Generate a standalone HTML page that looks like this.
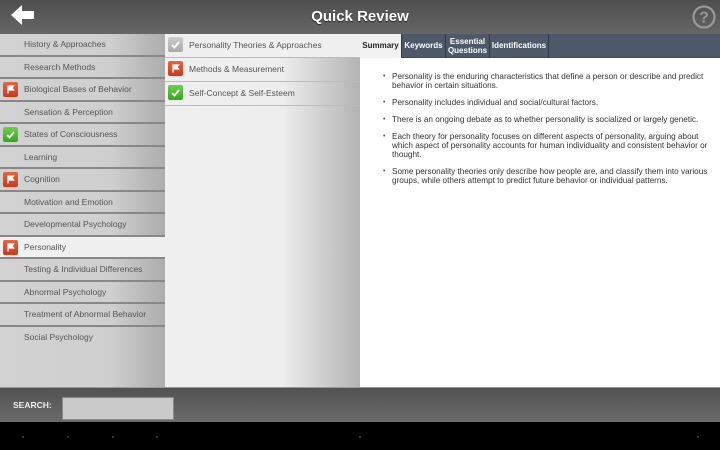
<!DOCTYPE html>
<html><head><style>
*{margin:0;padding:0;box-sizing:border-box}
body{width:720px;height:450px;overflow:hidden;font-family:"Liberation Sans",sans-serif;background:#000;position:relative}
.hdr{position:absolute;left:0;top:0;width:720px;height:34px;background:linear-gradient(#4e4e4e,#666);}
.title{position:absolute;left:0;right:0;top:8px;text-align:center;color:#fff;font-weight:bold;font-size:15px;text-shadow:0 1px 1px #222}
.col1{position:absolute;left:0;top:34px;width:165px;height:353px;background:linear-gradient(90deg,#d2d2d2 0,#cfcfcf 110px,#adadad 165px)}
.r1{position:absolute;left:0;width:165px;height:22.5px;border-bottom:2px solid #888;font-size:8.5px;color:#555;padding-left:24px;line-height:21px}
.sel{background:#f0f0f0}
.ic{position:absolute;left:3px;top:3px;width:15px;height:15px;border-radius:2px}
.fl{background:linear-gradient(#e8633e,#c63c1e)}
.ck{background:linear-gradient(#6cd24c,#3aa321)}
.gy{background:linear-gradient(#ccc,#aaa)}
.ic svg{position:absolute;left:0;top:0}
.col2{position:absolute;left:165px;top:34px;width:195px;height:353px;background:linear-gradient(90deg,#f0f0f0 0,#eeeeee 60%,#b3b3b3 100%)}
.r2{position:absolute;left:0;width:195px;height:24px;border-bottom:1px solid #bbb;font-size:8.5px;color:#555;padding-left:24px;line-height:23px}
.content{position:absolute;left:360px;top:34px;width:360px;height:353px;background:#fff}
.tabs{position:absolute;left:0;top:0;width:360px;height:24px;background:#4d5868;border-bottom:1px solid #3e4757}
.tab{position:absolute;top:0;height:24px;color:#fff;font-weight:bold;font-size:8px;text-align:center;border-right:1px solid #2f3845;line-height:24px}
ul{position:absolute;left:24px;top:38px;width:330px;font-size:8.2px;color:#333;line-height:9px;list-style:none}
li{position:relative;margin-bottom:8px;padding-left:8px}
li:before{content:"•";position:absolute;left:-1px;top:0;font-size:7px;color:#555}
.bot{position:absolute;left:0;top:387px;width:720px;height:35px;background:linear-gradient(#525252,#6a6a6a);border-top:1px solid #999}
.dot{position:absolute;top:436px;width:2px;height:2px;background:#333}
</style></head><body>
<div class="hdr">
<svg style="position:absolute;left:11px;top:5px" width="24" height="20" viewBox="0 0 24 20"><path d="M0 10 L11 0 L11 6 L23 6 L23 14 L11 14 L11 20 Z" fill="#fff"/></svg>
<div class="title">Quick Review</div>
<svg style="position:absolute;left:692px;top:5px" width="24" height="24" viewBox="0 0 24 24"><circle cx="12" cy="12" r="10.5" fill="none" stroke="#999" stroke-width="2.2"/><text x="12" y="17.5" text-anchor="middle" font-family="Liberation Sans" font-weight="bold" font-size="16" fill="#999">?</text></svg>
</div>
<div class="col1">
<div class="r1" style="top:0">History &amp; Approaches</div>
<div class="r1" style="top:22.5px">Research Methods</div>
<div class="r1" style="top:45px"><div class="ic fl"><svg width="15" height="15"><path d="M5 3.5v8M5 4h5.5l-1.5 2 1.5 2H5" fill="#fff" stroke="#fff" stroke-width="1.3"/></svg></div>Biological Bases of Behavior</div>
<div class="r1" style="top:67.5px">Sensation &amp; Perception</div>
<div class="r1" style="top:90px"><div class="ic ck"><svg width="15" height="15"><path d="M4 8l2.5 2.5L11 5" fill="none" stroke="#fff" stroke-width="1.8"/></svg></div>States of Consciousness</div>
<div class="r1" style="top:112.5px">Learning</div>
<div class="r1" style="top:135px"><div class="ic fl"><svg width="15" height="15"><path d="M5 3.5v8M5 4h5.5l-1.5 2 1.5 2H5" fill="#fff" stroke="#fff" stroke-width="1.3"/></svg></div>Cognition</div>
<div class="r1" style="top:157.5px">Motivation and Emotion</div>
<div class="r1" style="top:180px">Developmental Psychology</div>
<div class="r1 sel" style="top:202.5px"><div class="ic fl"><svg width="15" height="15"><path d="M5 3.5v8M5 4h5.5l-1.5 2 1.5 2H5" fill="#fff" stroke="#fff" stroke-width="1.3"/></svg></div>Personality</div>
<div class="r1" style="top:225px">Testing &amp; Individual Differences</div>
<div class="r1" style="top:247.5px">Abnormal Psychology</div>
<div class="r1" style="top:270px">Treatment of Abnormal Behavior</div>
<div class="r1" style="top:292.5px;border:none">Social Psychology</div>
</div>
<div class="col2">
<div class="r2" style="top:0;background:#f0f0f0"><div class="ic gy"><svg width="15" height="15"><path d="M4 8l2.5 2.5L11 5" fill="none" stroke="#fff" stroke-width="1.8"/></svg></div>Personality Theories &amp; Approaches</div>
<div class="r2" style="top:24px"><div class="ic fl"><svg width="15" height="15"><path d="M5 3.5v8M5 4h5.5l-1.5 2 1.5 2H5" fill="#fff" stroke="#fff" stroke-width="1.3"/></svg></div>Methods &amp; Measurement</div>
<div class="r2" style="top:48px"><div class="ic ck"><svg width="15" height="15"><path d="M4 8l2.5 2.5L11 5" fill="none" stroke="#fff" stroke-width="1.8"/></svg></div>Self-Concept &amp; Self-Esteem</div>
</div>
<div class="content">
<div class="tabs">
<div class="tab" style="left:0;width:42px;background:#f2f2f2;color:#222">Summary</div>
<div class="tab" style="left:42px;width:44px">Keywords</div>
<div class="tab" style="left:86px;width:44px;line-height:9px;padding-top:3px">Essential<br>Questions</div>
<div class="tab" style="left:130px;width:59px">Identifications</div>
</div>
<ul>
<li>Personality is the enduring characteristics that define a person or describe and predict behavior in certain situations.</li>
<li>Personality includes individual and social/cultural factors.</li>
<li>There is an ongoing debate as to whether personality is socialized or largely genetic.</li>
<li>Each theory for personality focuses on different aspects of personality, arguing about which aspect of personality accounts for human individuality and consistent behavior or thought.</li>
<li>Some personality theories only describe how people are, and classify them into various groups, while others attempt to predict future behavior or individual patterns.</li>
</ul>
</div>
<div class="bot">
<div style="position:absolute;left:13px;top:12px;color:#eee;font-weight:bold;font-size:8.5px">SEARCH:</div>
<div style="position:absolute;left:62px;top:9px;width:112px;height:23px;background:#cacaca;border:1px solid #888"></div>
</div>
<div class="dot" style="left:22px"></div><div class="dot" style="left:67px"></div><div class="dot" style="left:112px"></div><div class="dot" style="left:156px"></div><div class="dot" style="left:359px"></div><div class="dot" style="left:697px"></div>
</body></html>
